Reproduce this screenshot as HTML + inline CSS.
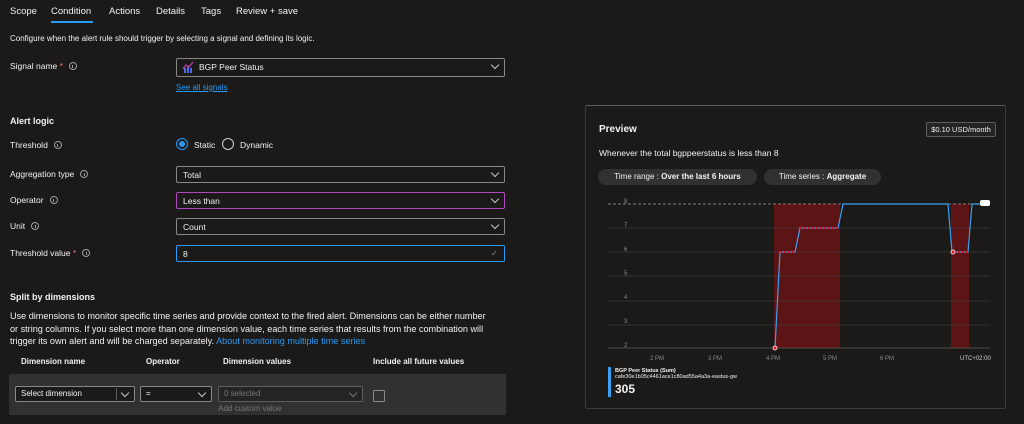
<!DOCTYPE html>
<html><head><meta charset="utf-8"><style>
*{box-sizing:border-box;margin:0;padding:0}
body{width:1024px;height:424px;background:#1b1a19;color:#f3f2f1;font-family:"Liberation Sans",sans-serif;font-size:8.5px;position:relative;overflow:hidden}
.a{position:absolute;white-space:nowrap}
.tab{top:6px;font-size:9.5px}
.lbl{left:10px;font-size:8.5px;line-height:10px}
.i{position:relative;display:inline-block;width:8px;height:8px;border:1px solid #a19f9d;border-radius:50%;margin-left:6px;top:0px;vertical-align:top;margin-top:1px}
.i::after{content:"";position:absolute;left:2.5px;top:2px;width:1px;height:3px;background:#a19f9d}
.req{color:#f1707b}
.inp{position:absolute;left:176px;width:329px;height:17px;border:1px solid #8a8886;border-radius:2px;padding:3px 6px;font-size:8.5px}
.chev{position:absolute;right:6px;top:3px;width:6px;height:6px;border-right:1.3px solid #c8c6c4;border-bottom:1.3px solid #c8c6c4;transform:rotate(45deg)}
.h{font-weight:bold;font-size:9px;left:10px}
.sel{position:absolute;top:386px;height:16px;border:1px solid #8a8886;background:#1b1a19;border-radius:2px;padding:2px 5px;font-size:8px}
</style></head><body>
<div class="a tab" style="left:10px">Scope</div>
<div class="a tab" style="left:51px">Condition</div>
<div style="position:absolute;left:51px;top:21px;width:42px;height:2px;background:#2899f5"></div>
<div class="a tab" style="left:109px">Actions</div>
<div class="a tab" style="left:156px">Details</div>
<div class="a tab" style="left:201px">Tags</div>
<div class="a tab" style="left:236px">Review + save</div>
<div class="a" style="left:10px;top:34px;font-size:8px">Configure when the alert rule should trigger by selecting a signal and defining its logic.</div>

<div class="a lbl" style="top:61px">Signal name <span class="req">*</span><span class="i"></span></div>
<div class="inp" style="top:58px;height:19px;padding-left:22px">
<svg style="position:absolute;left:6px;top:3px" width="11" height="11" viewBox="0 0 11 11"><rect x="1" y="6" width="2" height="5" fill="#4f6bed"/><rect x="4" y="4" width="2" height="7" fill="#4f6bed"/><rect x="7" y="6" width="2" height="5" fill="#4f6bed"/><polyline points="0,7 3,3 6,5 10,0" fill="none" stroke="#c239b3" stroke-width="1.3"/></svg>
BGP Peer Status<span class="chev"></span></div>
<div class="a" style="left:176px;top:83px;font-size:8px;color:#2899f5;text-decoration:underline">See all signals</div>

<div class="a h" style="top:116px">Alert logic</div>
<div class="a lbl" style="top:140px">Threshold<span class="i"></span></div>
<div class="a" style="left:176px;top:138px;width:12px;height:12px;border:1px solid #2899f5;border-radius:50%"><div style="margin:2px;width:6px;height:6px;border-radius:50%;background:#2899f5"></div></div>
<div class="a" style="left:194px;top:140px">Static</div>
<div class="a" style="left:222px;top:138px;width:12px;height:12px;border:1px solid #d2d0ce;border-radius:50%"></div>
<div class="a" style="left:240px;top:140px">Dynamic</div>

<div class="a lbl" style="top:169px">Aggregation type<span class="i"></span></div>
<div class="inp" style="top:166px">Total<span class="chev"></span></div>
<div class="a lbl" style="top:195px">Operator<span class="i"></span></div>
<div class="inp" style="top:192px;border-color:#b146c2">Less than<span class="chev"></span></div>
<div class="a lbl" style="top:221px">Unit<span class="i"></span></div>
<div class="inp" style="top:218px">Count<span class="chev"></span></div>
<div class="a lbl" style="top:248px">Threshold value <span class="req">*</span><span class="i"></span></div>
<div class="inp" style="top:245px;border-color:#2899f5">8<span style="position:absolute;right:6px;top:2px;color:#8a8886">✓</span></div>

<div class="a h" style="top:292px">Split by dimensions</div>
<div class="a" style="left:10px;top:310px;font-size:9.1px;line-height:12.7px;white-space:normal;width:486px">Use dimensions to monitor specific time series and provide context to the fired alert. Dimensions can be either number or string columns. If you select more than one dimension value, each time series that results from the combination will trigger its own alert and will be charged separately. <span style="color:#2899f5">About monitoring multiple time series</span></div>
<div class="a" style="left:21px;top:357px;font-weight:bold;font-size:8px">Dimension name</div>
<div class="a" style="left:146px;top:357px;font-weight:bold;font-size:8px">Operator</div>
<div class="a" style="left:223px;top:357px;font-weight:bold;font-size:8px">Dimension values</div>
<div class="a" style="left:373px;top:357px;font-weight:bold;font-size:8px">Include all future values</div>
<div class="a" style="left:9px;top:374px;width:497px;height:41px;background:#323130"></div>
<div class="sel" style="left:15px;width:120px">Select dimension<span class="chev" style="top:3px"></span><span style="position:absolute;right:17px;top:1px;width:1px;height:12px;background:#605e5c"></span></div>
<div class="sel" style="left:140px;width:72px">=<span class="chev" style="top:3px"></span></div>
<div class="sel" style="left:218px;width:145px;color:#797775;border-color:#605e5c;background:#252423">0 selected<span class="chev" style="top:3px;border-color:#797775"></span></div>
<div class="a" style="left:218px;top:404px;color:#797775;font-size:8px">Add custom value</div>
<div class="a" style="left:373px;top:390px;width:12px;height:12px;border:1px solid #8a8886;border-radius:1px"></div>

<div class="a" style="left:585px;top:105px;width:421px;height:304px;border:1px solid #3b3a39;border-top-color:#605e5c;border-radius:2px"></div>
<div class="a" style="left:599px;top:124px;font-weight:bold;font-size:10px">Preview</div>
<div class="a" style="left:926px;top:122px;width:70px;height:15px;border:1px solid #605e5c;background:#252423;border-radius:2px;font-size:7.5px;text-align:center;line-height:13px">$0.10 USD/month</div>
<div class="a" style="left:599px;top:148px;font-size:8.5px">Whenever the total bgppeerstatus is less than 8</div>
<div class="a" style="left:598px;top:169px;width:159px;height:16px;background:#323130;border-radius:8px;font-size:8px;text-align:center;line-height:16px">Time range : <b>Over the last 6 hours</b></div>
<div class="a" style="left:764px;top:169px;width:117px;height:16px;background:#323130;border-radius:8px;font-size:8px;text-align:center;line-height:16px">Time series : <b>Aggregate</b></div>

<svg class="a" style="left:585px;top:190px" width="420" height="220" viewBox="585 190 420 220">
<rect x="774" y="204" width="66" height="144" fill="#5c1414"/>
<rect x="951" y="204" width="18" height="144" fill="#5c1414"/>
<g stroke="#3b3a39" stroke-width="0.8">
<line x1="608" y1="228" x2="990" y2="228"/><line x1="608" y1="252" x2="990" y2="252"/><line x1="608" y1="276" x2="990" y2="276"/><line x1="608" y1="301" x2="990" y2="301"/><line x1="608" y1="325" x2="990" y2="325"/></g>
<line x1="608" y1="348" x2="990" y2="348" stroke="#605e5c" stroke-width="0.8"/>
<line x1="608" y1="204" x2="990" y2="204" stroke="#a19f9d" stroke-width="0.8" stroke-dasharray="3,2"/>
<g fill="#8a8886" font-size="6" font-family="Liberation Sans">
<text x="624" y="203">8</text><text x="624" y="227">7</text><text x="624" y="251">6</text><text x="624" y="275">5</text><text x="624" y="299">4</text><text x="624" y="323">3</text><text x="624" y="347">2</text>
<text x="650" y="360">2 PM</text><text x="708" y="360">3 PM</text><text x="766" y="360">4 PM</text><text x="823" y="360">5 PM</text><text x="880" y="360">6 PM</text><text x="960" y="360" fill="#d2d0ce">UTC+02:00</text></g>
<polyline points="775,348 780,252 795,252 800,228 838,228 843,204 948,204 952,252 968,252 972,204 985,204" fill="none" stroke="#3aa0f3" stroke-width="1.2"/>
<line x1="780" y1="252" x2="795" y2="252" stroke="#e81123" stroke-width="2" stroke-dasharray="2,2"/>
<line x1="800" y1="228" x2="838" y2="228" stroke="#e81123" stroke-width="2" stroke-dasharray="2,2"/>
<line x1="954" y1="252" x2="968" y2="252" stroke="#e81123" stroke-width="2" stroke-dasharray="2,2"/>
<circle cx="775" cy="348" r="2" fill="#e81123" stroke="#fff" stroke-width="0.8"/>
<circle cx="953" cy="252" r="2" fill="#e81123" stroke="#fff" stroke-width="0.8"/>
<rect x="980" y="200" width="10" height="6" rx="2" fill="#fff"/>
</svg>
<div class="a" style="left:608px;top:367px;width:3px;height:30px;background:#3aa0f3"></div>
<div class="a" style="left:615px;top:368px;font-size:5.5px;font-weight:bold">BGP Peer Status (Sum)</div>
<div class="a" style="left:615px;top:374px;font-size:5.5px">cafe30e1b05c4461ace1c80ad55a4a3a-eastus-gw</div>
<div class="a" style="left:615px;top:382px;font-size:12px;font-weight:bold">305</div>
</body></html>
